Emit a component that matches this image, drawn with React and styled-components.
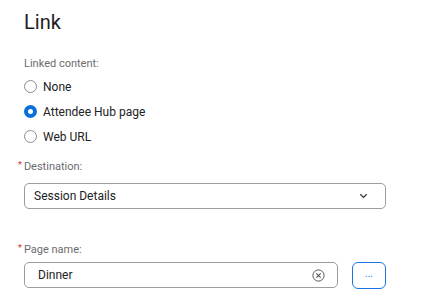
import React, { useState } from "react";
import styled, { createGlobalStyle } from "styled-components";

const Global = createGlobalStyle`
  html, body { margin: 0; padding: 0; background: #fff; }
  body { font-family: Roboto, "Noto Sans", "Liberation Sans", sans-serif; color: #222; }
`;

const Panel = styled.div`
  width: 425px;
  height: 305px;
  box-sizing: border-box;
  padding: 10px 39px 0 24px;
  display: flex;
  flex-direction: column;
`;

const Title = styled.h1`
  margin: 0;
  font-size: 20px;
  line-height: 24px;
  font-weight: 400;
  color: #1d1d1f;
`;

const Label = styled.div`
  font-size: 11px;
  line-height: 14px;
  color: #6b6b70;
  margin-top: ${(p) => p.$mt}px;
  display: flex;
  align-items: flex-start;
`;

const Star = styled.span`
  color: #d93025;
  font-size: 9px;
  line-height: 10px;
  margin-left: -6px;
  margin-right: 2px;
`;

const RadioGroup = styled.div`
  display: flex;
  flex-direction: column;
  margin-top: 3px;
`;

const RadioRow = styled.label`
  height: 25px;
  display: flex;
  align-items: center;
  gap: 6px;
  font-size: 12px;
  color: #222;
  cursor: pointer;
`;

const Circle = styled.span`
  width: 13px;
  height: 13px;
  box-sizing: border-box;
  border-radius: 50%;
  border: ${(p) => (p.$on ? "4px solid #0a6fdc" : "1px solid #8d8d92")};
  background: #fff;
  flex: none;
`;

const Field = styled.div`
  margin-top: ${(p) => p.$mt}px;
  display: flex;
  gap: 14px;
`;

const Box = styled.div`
  flex: 1;
  height: 26px;
  box-sizing: border-box;
  border: 1px solid #9b9ba0;
  border-radius: 5px;
  display: flex;
  align-items: center;
  padding: 0 ${(p) => p.$pr}px 0 ${(p) => p.$pl}px;
  font-size: 12px;
  color: #222;
`;

const BoxText = styled.span`
  flex: 1;
`;

const DotsButton = styled.button`
  width: 34px;
  height: 27px;
  box-sizing: border-box;
  border: 1.5px solid #1a73e8;
  border-radius: 6px;
  background: #fff;
  color: #1a73e8;
  font-family: inherit;
  font-size: 10px;
  line-height: 1;
  padding: 0 0 4px;
  cursor: pointer;
  flex: none;
`;

const options = ["None", "Attendee Hub page", "Web URL"];

export default function App() {
  const [sel, setSel] = useState(1);
  return (
    <>
      <Global />
      <Panel>
        <Title>Link</Title>
        <Label $mt={23}>Linked content:</Label>
        <RadioGroup>
          {options.map((o, i) => (
            <RadioRow key={o} onClick={() => setSel(i)}>
              <Circle $on={sel === i} />
              {o}
            </RadioRow>
          ))}
        </RadioGroup>
        <Label $mt={11}>
          <Star>*</Star>Destination:
        </Label>
        <Field $mt={9}>
          <Box $pl={9} $pr={17}>
            <BoxText>Session Details</BoxText>
            <svg width="9" height="6" viewBox="0 0 9 6">
              <path d="M1.3 1.3 L4.5 4.4 L7.7 1.3" fill="none" stroke="#333" strokeWidth="1.3" />
            </svg>
          </Box>
        </Field>
        <Label $mt={34}>
          <Star>*</Star>Page name:
        </Label>
        <Field $mt={5}>
          <Box $pl={13} $pr={12}>
            <BoxText>Dinner</BoxText>
            <svg width="13" height="13" viewBox="0 0 13 13">
              <circle cx="6.5" cy="6.5" r="5.6" fill="none" stroke="#555" strokeWidth="1" />
              <path d="M4.3 4.3 L8.7 8.7 M8.7 4.3 L4.3 8.7" stroke="#555" strokeWidth="1.1" />
            </svg>
          </Box>
          <DotsButton>...</DotsButton>
        </Field>
      </Panel>
    </>
  );
}
